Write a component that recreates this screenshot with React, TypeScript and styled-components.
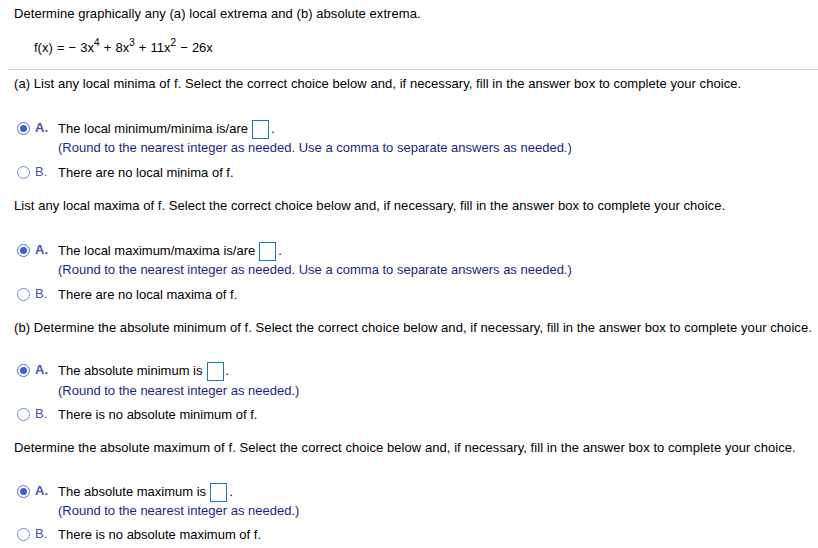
import React from "react";
import styled, { createGlobalStyle } from "styled-components";

const Global = createGlobalStyle`
  html, body { margin: 0; padding: 0; background: #ffffff; }
  body { font-family: "Liberation Sans", Arial, sans-serif; font-size: 13px; color: #000; }
`;

const Page = styled.div`
  width: 818px;
  height: 548px;
  overflow: hidden;
  padding-top: 6px;
  box-sizing: border-box;
`;

const Para = styled.div<{ $top?: number }>`
  padding-left: 14px;
  margin-top: ${(p) => p.$top ?? 0}px;
  line-height: 16px;
  height: 16px;
  white-space: nowrap;
  letter-spacing: 0.06px;
`;

const Formula = styled.div`
  padding-left: 34px;
  margin-top: 18px;
  line-height: 16px;
  height: 16px;
  white-space: nowrap;
  word-spacing: 0.5px;
  sup { font-size: 10px; vertical-align: 6px; line-height: 0; }
`;

const Divider = styled.hr`
  margin: 13px 0 0 8px;
  border: none;
  border-top: 1px solid #c9cfdb;
  height: 0;
`;

const Choice = styled.div<{ $top: number }>`
  display: grid;
  grid-template-columns: 18px 23px auto;
  align-items: start;
  margin-top: ${(p) => p.$top}px;
  padding-left: 17px;
`;

const Radio = styled.span<{ $on?: boolean }>`
  width: 11px;
  height: 11px;
  border-radius: 50%;
  border: 1px solid ${(p) => (p.$on ? "#4f6fd0" : "#6f8ad8")};
  margin-top: 1px;
  display: flex;
  align-items: center;
  justify-content: center;
  background: #fff;
  &::after {
    content: "";
    display: ${(p) => (p.$on ? "block" : "none")};
    width: 7px;
    height: 7px;
    border-radius: 50%;
    background: #3d5fd0;
  }
`;

const Letter = styled.span<{ $bold?: boolean }>`
  font-weight: ${(p) => (p.$bold ? 700 : 400)};
  color: #4a52b0;
  line-height: 16px;
  margin-top: -1px;
`;

const Body = styled.div`
  display: flex;
  flex-direction: column;
  line-height: 16px;
  white-space: nowrap;
`;

const Line = styled.span`
  display: flex;
  align-items: center;
  height: 16px;
`;

const Hint = styled.span<{ $top: number }>`
  color: #1c1f86;
  margin-top: ${(p) => p.$top}px;
  height: 16px;
`;

const Box = styled.span`
  display: inline-block;
  flex: none;
  width: 15px;
  height: 17px;
  border: 1px solid #1a7c9c;
  margin: 0 2px 0 4px;
  background: #fff;
`;

type Q = { a: React.ReactNode; hint: string; b: string; first: number; hintTop: number; bTop: number };

const Block: React.FC<Q> = ({ a, hint, b, first, hintTop, bTop }) => (
  <>
    <Choice $top={first}>
      <Radio $on />
      <Letter $bold>A.</Letter>
      <Body>
        <Line>
          {a}
          <Box />.
        </Line>
        <Hint $top={hintTop}>{hint}</Hint>
      </Body>
    </Choice>
    <Choice $top={bTop}>
      <Radio />
      <Letter>B.</Letter>
      <Body>
        <Line>{b}</Line>
      </Body>
    </Choice>
  </>
);

export default function App() {
  return (
    <Page>
      <Global />
      <Para>Determine graphically any (a) local extrema and (b) absolute extrema.</Para>
      <Formula>
        f(x) = − 3x<sup>4</sup> + 8x<sup>3</sup> + 11x<sup>2</sup> − 26x
      </Formula>
      <Divider />
      <Para $top={6}>
        (a) List any local minima of f. Select the correct choice below and, if necessary, fill in the answer box to complete your choice.
      </Para>
      <Block
        first={29}
        hintTop={3}
        bTop={9}
        a="The local minimum/minima is/are"
        hint="(Round to the nearest integer as needed. Use a comma to separate answers as needed.)"
        b="There are no local minima of f."
      />
      <Para $top={17}>
        List any local maxima of f. Select the correct choice below and, if necessary, fill in the answer box to complete your choice.
      </Para>
      <Block
        first={29}
        hintTop={3}
        bTop={9}
        a="The local maximum/maxima is/are"
        hint="(Round to the nearest integer as needed. Use a comma to separate answers as needed.)"
        b="There are no local maxima of f."
      />
      <Para $top={17}>
        (b) Determine the absolute minimum of f. Select the correct choice below and, if necessary, fill in the answer box to complete your choice.
      </Para>
      <Block
        first={27}
        hintTop={4}
        bTop={8}
        a="The absolute minimum is"
        hint="(Round to the nearest integer as needed.)"
        b="There is no absolute minimum of f."
      />
      <Para $top={17}>
        Determine the absolute maximum of f. Select the correct choice below and, if necessary, fill in the answer box to complete your choice.
      </Para>
      <Block
        first={28}
        hintTop={3}
        bTop={8}
        a="The absolute maximum is"
        hint="(Round to the nearest integer as needed.)"
        b="There is no absolute maximum of f."
      />
    </Page>
  );
}
